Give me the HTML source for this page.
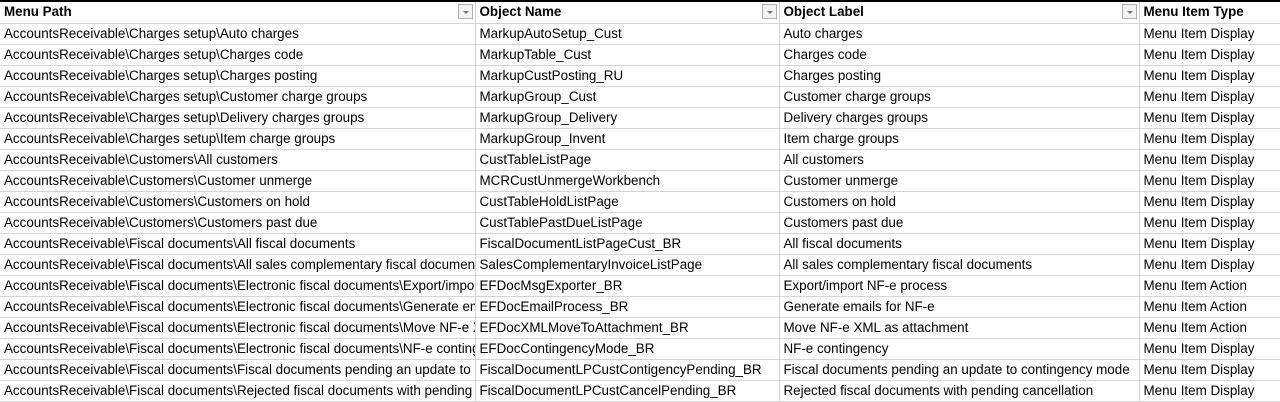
<!DOCTYPE html>
<html><head><style>
body{margin:0;width:1280px;height:401px;overflow:hidden;background:#fff;font-family:"Liberation Sans",sans-serif;font-size:13.4px;color:#000}
table{border-collapse:collapse;table-layout:fixed;position:absolute;left:0;top:0;width:1280px}
td,th{padding:0 0 0 4px;border-right:1px solid #d4d4d4;border-bottom:1px solid #d4d4d4;white-space:nowrap;overflow:hidden;text-align:left;line-height:20px;box-sizing:border-box}
th{height:22px;font-weight:bold;border-top:2px solid #000;border-bottom:1px solid #d4d4d4;position:relative}
td{height:21px}
.f{position:absolute;right:2px;top:2px;width:15px;height:15px;border:1px solid #b0b0b0;background:#f3f3f3;box-sizing:border-box}
.f:after{content:"";position:absolute;left:4px;top:6px;border-left:3px solid transparent;border-right:3px solid transparent;border-top:3px solid #777}
</style></head><body>
<table>
<colgroup><col style="width:475px"><col style="width:304px"><col style="width:360px"><col style="width:141px"></colgroup>
<tr><th>Menu Path<span class="f"></span></th><th>Object Name<span class="f"></span></th><th>Object Label<span class="f"></span></th><th>Menu Item Type</th></tr>
<tr><td>AccountsReceivable\Charges setup\Auto charges</td><td>MarkupAutoSetup_Cust</td><td>Auto charges</td><td>Menu Item Display</td></tr>
<tr><td>AccountsReceivable\Charges setup\Charges code</td><td>MarkupTable_Cust</td><td>Charges code</td><td>Menu Item Display</td></tr>
<tr><td>AccountsReceivable\Charges setup\Charges posting</td><td>MarkupCustPosting_RU</td><td>Charges posting</td><td>Menu Item Display</td></tr>
<tr><td>AccountsReceivable\Charges setup\Customer charge groups</td><td>MarkupGroup_Cust</td><td>Customer charge groups</td><td>Menu Item Display</td></tr>
<tr><td>AccountsReceivable\Charges setup\Delivery charges groups</td><td>MarkupGroup_Delivery</td><td>Delivery charges groups</td><td>Menu Item Display</td></tr>
<tr><td>AccountsReceivable\Charges setup\Item charge groups</td><td>MarkupGroup_Invent</td><td>Item charge groups</td><td>Menu Item Display</td></tr>
<tr><td>AccountsReceivable\Customers\All customers</td><td>CustTableListPage</td><td>All customers</td><td>Menu Item Display</td></tr>
<tr><td>AccountsReceivable\Customers\Customer unmerge</td><td>MCRCustUnmergeWorkbench</td><td>Customer unmerge</td><td>Menu Item Display</td></tr>
<tr><td>AccountsReceivable\Customers\Customers on hold</td><td>CustTableHoldListPage</td><td>Customers on hold</td><td>Menu Item Display</td></tr>
<tr><td>AccountsReceivable\Customers\Customers past due</td><td>CustTablePastDueListPage</td><td>Customers past due</td><td>Menu Item Display</td></tr>
<tr><td>AccountsReceivable\Fiscal documents\All fiscal documents</td><td>FiscalDocumentListPageCust_BR</td><td>All fiscal documents</td><td>Menu Item Display</td></tr>
<tr><td>AccountsReceivable\Fiscal documents\All sales complementary fiscal documents</td><td>SalesComplementaryInvoiceListPage</td><td>All sales complementary fiscal documents</td><td>Menu Item Display</td></tr>
<tr><td>AccountsReceivable\Fiscal documents\Electronic fiscal documents\Export/import NF-e process</td><td>EFDocMsgExporter_BR</td><td>Export/import NF-e process</td><td>Menu Item Action</td></tr>
<tr><td>AccountsReceivable\Fiscal documents\Electronic fiscal documents\Generate emails for NF-e</td><td>EFDocEmailProcess_BR</td><td>Generate emails for NF-e</td><td>Menu Item Action</td></tr>
<tr><td>AccountsReceivable\Fiscal documents\Electronic fiscal documents\Move NF-e XML as attachment</td><td>EFDocXMLMoveToAttachment_BR</td><td>Move NF-e XML as attachment</td><td>Menu Item Action</td></tr>
<tr><td>AccountsReceivable\Fiscal documents\Electronic fiscal documents\NF-e contingency</td><td>EFDocContingencyMode_BR</td><td>NF-e contingency</td><td>Menu Item Display</td></tr>
<tr><td>AccountsReceivable\Fiscal documents\Fiscal documents pending an update to contingency mode</td><td>FiscalDocumentLPCustContigencyPending_BR</td><td>Fiscal documents pending an update to contingency mode</td><td>Menu Item Display</td></tr>
<tr><td>AccountsReceivable\Fiscal documents\Rejected fiscal documents with pending cancellation</td><td>FiscalDocumentLPCustCancelPending_BR</td><td>Rejected fiscal documents with pending cancellation</td><td>Menu Item Display</td></tr>
</table>
</body></html>
